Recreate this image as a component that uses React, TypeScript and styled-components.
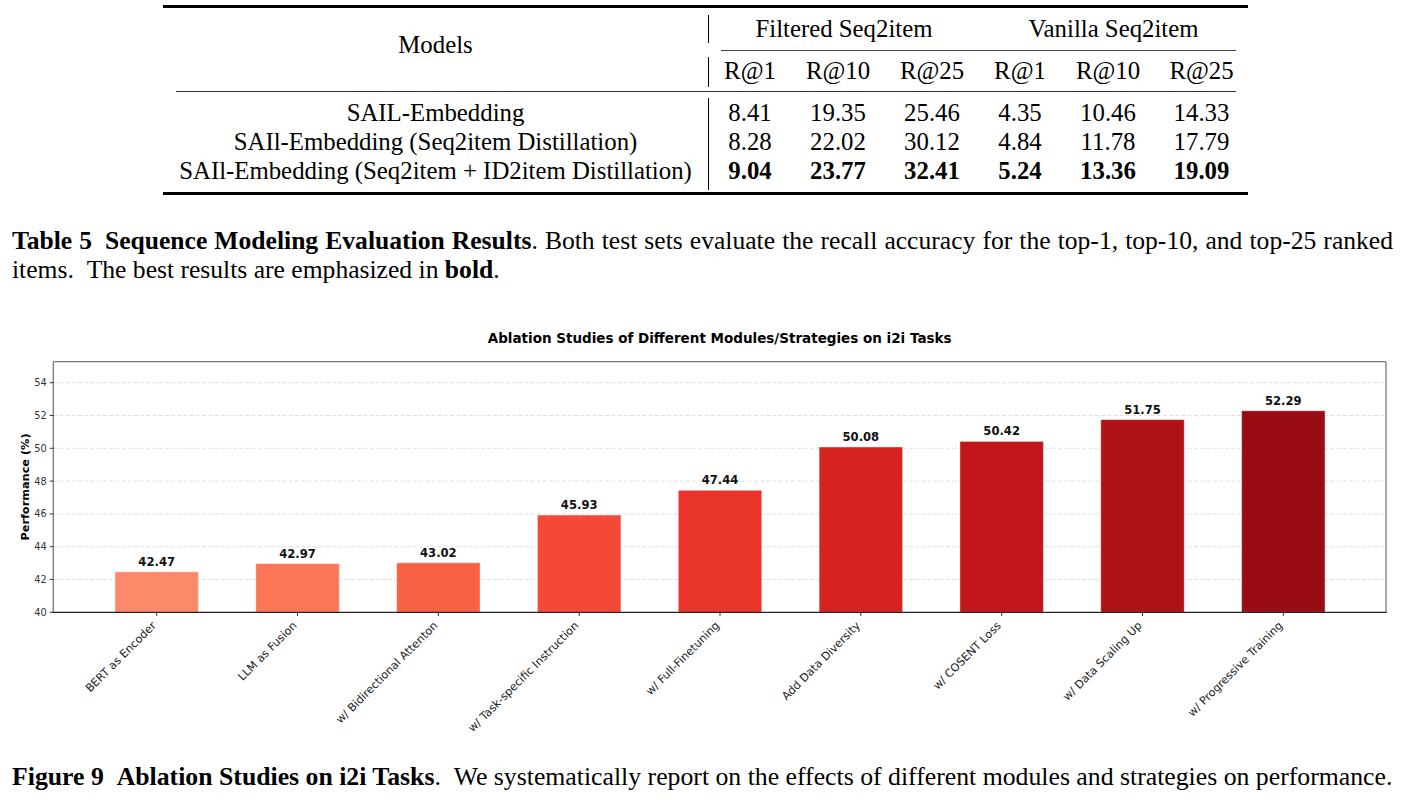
import React from "react";
import styled, { createGlobalStyle } from "styled-components";

const GlobalStyle = createGlobalStyle`
  html, body { margin: 0; padding: 0; background: #fff; }
  body {
    font-family: "Liberation Serif", "Times New Roman", serif;
    color: #000;
  }
`;

const Page = styled.div`
  width: 1408px;
  height: 810px;
  overflow: hidden;
  display: flex;
  flex-direction: column;
`;

/* ---------- Table ---------- */

const COLS = "545px 1px 82px 94px 94px 82px 94px 93px";

const TableWrap = styled.section`
  margin: 5px 0 0 163px;
  width: 1085px;
  font-size: 24.8px;
  display: flex;
  flex-direction: column;
`;

const Rule = styled.div<{ $h: number; $l?: number; $r?: number; $c?: string }>`
  height: ${(p) => p.$h}px;
  background: ${(p) => p.$c ?? "#000"};
  margin: 0 ${(p) => p.$r ?? 0}px 0 ${(p) => p.$l ?? 0}px;
`;

const HeadGrid = styled.div`
  display: grid;
  grid-template-columns: ${COLS};
  grid-template-rows: 42px 1px 40px;
`;

const BodyGrid = styled.div`
  display: grid;
  grid-template-columns: ${COLS};
  grid-template-rows: 6.5px 29px 29px 29px 6.5px;
`;

const Cell = styled.div<{ $col: string; $row: string; $bold?: boolean; $pb?: number }>`
  grid-column: ${(p) => p.$col};
  grid-row: ${(p) => p.$row};
  display: flex;
  align-items: center;
  justify-content: center;
  line-height: 1;
  white-space: nowrap;
  padding-bottom: ${(p) => p.$pb ?? 0}px;
  font-weight: ${(p) => (p.$bold ? 700 : 400)};
`;

const VRule = styled.div<{ $row: string; $mt: number; $mb: number }>`
  grid-column: 2;
  grid-row: ${(p) => p.$row};
  margin: ${(p) => p.$mt}px 0 ${(p) => p.$mb}px;
  background: #000;
`;

const CMidRule = styled.div`
  grid-column: 3 / 9;
  grid-row: 2;
  margin: 0 12px;
  background: #444;
`;

/* ---------- Captions ---------- */

const Caption = styled.p<{ $mt: number; $fs: number }>`
  margin: ${(p) => p.$mt}px 0 0 12px;
  width: 1381px;
  font-size: ${(p) => p.$fs}px;
  line-height: 29px;
`;

const JustLine = styled.span`
  display: block;
  text-align: justify;
  text-align-last: justify;
`;

const PlainLine = styled.span`
  display: block;
  white-space: nowrap;
`;

/* ---------- Chart ---------- */

const ChartSvg = styled.svg`
  display: block;
  margin-top: 6px;
  font-family: "DejaVu Sans", "Liberation Sans", sans-serif;
`;

const models = [
  { name: "SAIL-Embedding", v: ["8.41", "19.35", "25.46", "4.35", "10.46", "14.33"], bold: false },
  { name: "SAIl-Embedding (Seq2item Distillation)", v: ["8.28", "22.02", "30.12", "4.84", "11.78", "17.79"], bold: false },
  { name: "SAIl-Embedding (Seq2item + ID2item Distillation)", v: ["9.04", "23.77", "32.41", "5.24", "13.36", "19.09"], bold: true },
];
const subHeads = ["R@1", "R@10", "R@25", "R@1", "R@10", "R@25"];

const values = [42.47, 42.97, 43.02, 45.93, 47.44, 50.08, 50.42, 51.75, 52.29];
const labels = [
  "BERT as Encoder",
  "LLM as Fusion",
  "w/ Bidirectional Attenton",
  "w/ Task-specific Instruction",
  "w/ Full-Finetuning",
  "Add Data Diversity",
  "w/ COSENT Loss",
  "w/ Data Scaling Up",
  "w/ Progressive Training",
];
const colors = ["#FC8A6A", "#FB7656", "#F96144", "#F34936", "#E83429", "#D62322", "#C3161B", "#B01217", "#990C13"];

const PX0 = 53.3;
const PX1 = 1386;
const PY0 = 71.7;
const PY1 = 322.3;
const YMIN = 40;
const YMAX = 55.28;
const ys = (v: number) => PY1 - ((v - YMIN) * (PY1 - PY0)) / (YMAX - YMIN);
const xc = (i: number) => 156.7 + i * 140.83;
const BAR_W = 83.5;
const yTicks = [40, 42, 44, 46, 48, 50, 52, 54];

function Chart() {
  return (
    <ChartSvg width={1408} height={466} viewBox="0 0 1408 466">
      <text x={(PX0 + PX1) / 2} y={53} textAnchor="middle" fontSize={13.5} fontWeight={700} fill="#000">
        Ablation Studies of Different Modules/Strategies on i2i Tasks
      </text>
      {yTicks.slice(1).map((t) => (
        <line key={t} x1={PX0} x2={PX1} y1={ys(t)} y2={ys(t)} stroke="#dcdcdc" strokeWidth={0.9} strokeDasharray="4 2.2" />
      ))}
      {values.map((v, i) => (
        <g key={i}>
          <rect
            x={xc(i) - BAR_W / 2}
            y={ys(v)}
            width={BAR_W}
            height={PY1 - ys(v)}
            fill={colors[i]}
            stroke="rgba(255,255,255,0.45)"
            strokeWidth={1}
          />
          <text x={xc(i)} y={ys(v) - 6} textAnchor="middle" fontSize={11.6} fontWeight={700} fill="#111">
            {v.toFixed(2)}
          </text>
          <line x1={xc(i)} x2={xc(i)} y1={PY1} y2={PY1 + 3.5} stroke="#222" strokeWidth={1} />
          <text
            transform={`translate(${xc(i)}, ${PY1 + 14}) rotate(-45)`}
            x={0}
            y={0}
            textAnchor="end"
            fontSize={11.2}
            fill="#222"
          >
            {labels[i]}
          </text>
        </g>
      ))}
      <line x1={PX0} x2={PX1} y1={PY0} y2={PY0} stroke="#7a7a7a" strokeWidth={1.3} />
      <line x1={PX1} x2={PX1} y1={PY0} y2={PY1} stroke="#7a7a7a" strokeWidth={1.3} />
      <line x1={PX0} x2={PX0} y1={PY0} y2={PY1} stroke="#7a7a7a" strokeWidth={1.3} />
      <line x1={PX0 - 0.6} x2={PX1 + 0.6} y1={PY1} y2={PY1} stroke="#222" strokeWidth={1.3} />
      {yTicks.map((t) => (
        <g key={t}>
          <line x1={PX0 - 3.5} x2={PX0} y1={ys(t)} y2={ys(t)} stroke="#333" strokeWidth={1} />
          <text x={PX0 - 6.5} y={ys(t) + 3.6} textAnchor="end" fontSize={9.8} fill="#333">
            {t}
          </text>
        </g>
      ))}
      <text
        transform={`translate(29, ${(PY0 + PY1) / 2}) rotate(-90)`}
        textAnchor="middle"
        fontSize={11.3}
        fontWeight={700}
        fill="#000"
      >
        Performance (%)
      </text>
    </ChartSvg>
  );
}

export default function App() {
  return (
    <Page>
      <GlobalStyle />
      <TableWrap>
        <Rule $h={3} />
        <HeadGrid>
          <Cell $col="1" $row="1 / 4" $pb={8}>
            Models
          </Cell>
          <VRule $row="1" $mt={7} $mb={7} />
          <VRule $row="3" $mt={6} $mb={4} />
          <Cell $col="3 / 6" $row="1">Filtered Seq2item</Cell>
          <Cell $col="6 / 9" $row="1">Vanilla Seq2item</Cell>
          <CMidRule />
          {subHeads.map((h, i) => (
            <Cell key={i} $col={String(i + 3)} $row="3">
              {h}
            </Cell>
          ))}
        </HeadGrid>
        <Rule $h={1} $l={13} $r={12} $c="#333" />
        <BodyGrid>
          <VRule $row="1 / 6" $mt={6} $mb={2} />
          {models.map((m, r) => (
            <React.Fragment key={m.name}>
              <Cell $col="1" $row={String(r + 2)}>
                {m.name}
              </Cell>
              {m.v.map((v, c) => (
                <Cell key={c} $col={String(c + 3)} $row={String(r + 2)} $bold={m.bold}>
                  {v}
                </Cell>
              ))}
            </React.Fragment>
          ))}
        </BodyGrid>
        <Rule $h={3} />
      </TableWrap>

      <Caption $mt={31} $fs={25.6}>
        <JustLine>
          <b>Table 5{"\u2002"}Sequence Modeling Evaluation Results</b>. Both test sets evaluate the recall accuracy for
          the top-1, top-10, and top-25 ranked
        </JustLine>
        <PlainLine>
          items.{"\u2002"}The best results are emphasized in <b>bold</b>.
        </PlainLine>
      </Caption>

      <Chart />

      <Caption $mt={6} $fs={25.75}>
        <PlainLine>
          <b>Figure 9{"\u2002"}Ablation Studies on i2i Tasks</b>.{"\u2002"}We systematically report on the effects of
          different modules and strategies on performance.
        </PlainLine>
      </Caption>
    </Page>
  );
}
